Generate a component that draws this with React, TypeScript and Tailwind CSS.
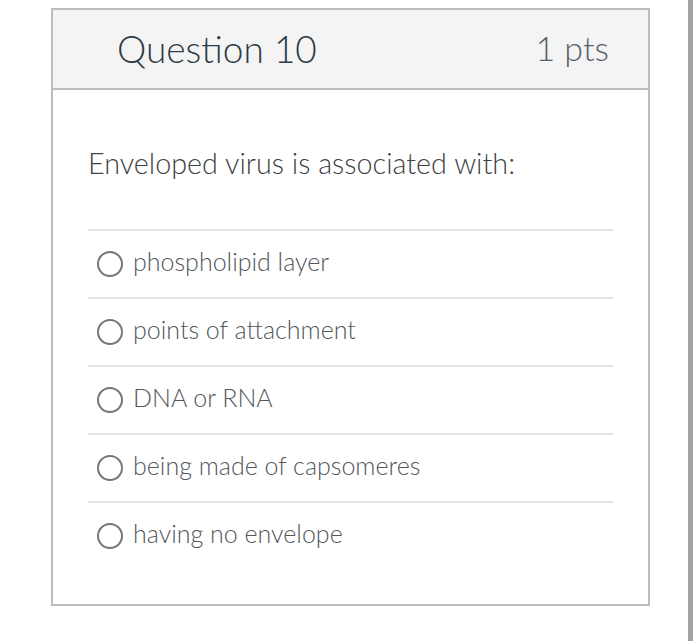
import React from "react";

const options = [
  "phospholipid layer",
  "points of attachment",
  "DNA or RNA",
  "being made of capsomeres",
  "having no envelope",
];

export default function App() {
  return (
    <div
      className="flex h-[641px] w-[700px] bg-white font-light"
      style={{ fontFamily: "Lato, 'Open Sans', sans-serif" }}
    >
      <div className="pl-[51px] pt-[8px]">
        <div className="flex h-[598px] w-[599px] flex-col border-2 border-[#bdbdbd] bg-white">
          <div className="flex h-[80px] items-center justify-between border-b-2 border-[#bdbdbd] bg-[#f4f4f4] pl-[64px] pr-[39px]">
            <span className="pb-[2px] text-[37px] leading-none text-[#2d3b45]">Question 10</span>
            <span className="pb-[2px] text-[34px] leading-none text-[#56606a]">1 pts</span>
          </div>
          <div className="px-[35px]">
            <div className="h-[139px] pt-[55px] text-[28.75px] leading-[36px] text-[#3d4246]">
              Enveloped virus is associated with:
            </div>
            {options.map((o, i) => (
              <div
                key={i}
                className="flex h-[68px] items-center border-t-2 border-[#e4e4e4] pl-[9px]"
              >
                <span className="box-border h-[26px] w-[26px] shrink-0 rounded-full border-[2.5px] border-[#777777]" />
                <span className="ml-[10px] pb-[5px] text-[25px] leading-none text-[#52575c]">{o}</span>
              </div>
            ))}
          </div>
        </div>
      </div>
      <div className="ml-[38px] h-[641px] w-[5px] bg-[#a3a3a3]" />
    </div>
  );
}
